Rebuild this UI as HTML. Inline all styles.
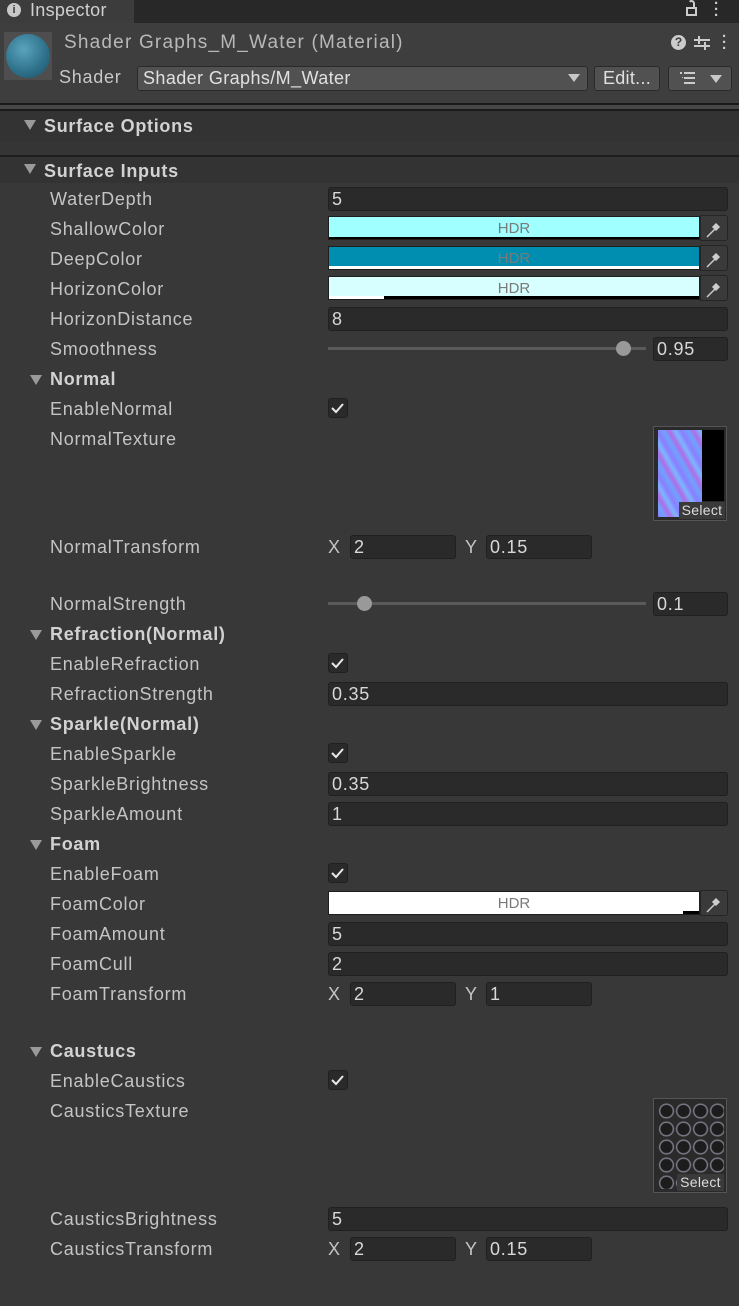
<!DOCTYPE html>
<html><head><meta charset="utf-8"><style>
*{margin:0;padding:0;box-sizing:border-box}
body{width:739px;height:1306px;background:#383838;font-family:"Liberation Sans",sans-serif;color:#c4c4c4;position:relative;overflow:hidden;font-size:18px;letter-spacing:0.75px}
.a{position:absolute}
.lbl{position:absolute;left:50px;height:24px;line-height:24px;white-space:nowrap}
.hd{position:absolute;left:50px;height:24px;line-height:24px;font-weight:bold;color:#d2d2d2;letter-spacing:0.7px}
.tri{position:absolute;left:30px;width:0;height:0;border-left:6px solid transparent;border-right:6px solid transparent;border-top:10px solid #9a9a9a}
.fld{position:absolute;left:328px;width:400px;height:24px;background:#2a2a2a;border:1px solid #202020;border-radius:3px;line-height:22px;padding-left:3px;color:#d8d8d8}
.chk{position:absolute;left:328px;width:20px;height:20px;background:#2a2a2a;border:1px solid #202020;border-radius:3px}
.col{position:absolute;left:328px;width:372px;height:24px;border:1px solid #1e1e1e}
.col span{position:absolute;left:0;right:0;top:3px;text-align:center;font-size:15px;color:#7a7a7a;letter-spacing:0}
.pick{position:absolute;left:700px;width:28px;height:26px;background:#3a3a3a;border:1px solid #252525;border-radius:0 3px 3px 0}
.small{position:absolute;height:24px;background:#2a2a2a;border:1px solid #202020;border-radius:3px;line-height:22px;padding-left:3px;color:#d8d8d8}
.xy{position:absolute;height:24px;line-height:24px}
</style></head><body>
<div class="a" style="left:0;top:0;width:739px;height:23px;background:#282828"></div>
<div class="a" style="left:0;top:0;width:134px;height:23px;background:#3c3c3c"></div>
<div class="a" style="left:7px;top:3px;width:14px;height:14px;border-radius:50%;background:#c8c8c8;color:#3c3c3c;font-size:11px;font-weight:bold;text-align:center;line-height:14px;letter-spacing:0">i</div>
<div class="a" style="left:30px;top:0;line-height:21px;font-size:18px;color:#d0d0d0;letter-spacing:0.3px">Inspector</div>
<div class="a" style="left:686px;top:7px;width:11px;height:9px;background:#282828;border:2px solid #ccc"></div>
<div class="a" style="left:688px;top:0px;width:7px;height:9px;border:2px solid #ccc;border-bottom:none;border-radius:4px 4px 0 0;border-left-color:transparent"></div>
<div class="a" style="left:714px;top:1px;color:#ccc;font-size:15px;font-weight:bold;line-height:6px">·<br>·<br>·</div>
<div class="a" style="left:0;top:23px;width:739px;height:80px;background:#3e3e3e"></div>
<div class="a" style="left:4px;top:32px;width:48px;height:48px;background:#4e4e4e"></div>
<div class="a" style="left:6px;top:34px;width:44px;height:44px;border-radius:50%;background:radial-gradient(circle at 40% 35%,#5aa3bd,#2d6f88 60%,#1d4f62)"></div>
<div class="a" style="left:64px;top:32px;font-size:19px;color:#b8b8b8;letter-spacing:1.2px">Shader Graphs_M_Water (Material)</div>
<div class="a" style="left:671px;top:35px;width:15px;height:15px;border-radius:50%;background:#ccc;color:#3e3e3e;font-size:12px;font-weight:bold;text-align:center;line-height:15px;letter-spacing:0">?</div>
<svg class="a" style="left:693px;top:34px" width="18" height="18"><g stroke="#ccc" stroke-width="2"><path d="M1 6h16M1 12h16M6 2v8M12 8v8"/></g></svg>
<div class="a" style="left:722px;top:34px;color:#ccc;font-size:15px;font-weight:bold;line-height:6px">·<br>·<br>·</div>
<div class="a" style="left:59px;top:67px;font-size:18px;color:#c8c8c8">Shader</div>
<div class="a" style="left:137px;top:66px;width:451px;height:25px;background:#515151;border:1px solid #2a2a2a;border-radius:3px;padding-left:5px;line-height:23px;font-size:18px;color:#e0e0e0;letter-spacing:0.4px">Shader Graphs/M_Water</div>
<div class="a" style="left:568px;top:74px;border-left:6px solid transparent;border-right:6px solid transparent;border-top:8px solid #c8c8c8"></div>
<div class="a" style="left:594px;top:66px;width:66px;height:25px;background:#515151;border:1px solid #2a2a2a;border-radius:3px;text-align:center;line-height:23px;font-size:18px;color:#e0e0e0;letter-spacing:0.3px">Edit...</div>
<div class="a" style="left:668px;top:66px;width:64px;height:25px;background:#515151;border:1px solid #2a2a2a;border-radius:3px"></div>
<svg class="a" style="left:680px;top:71px" width="16" height="14"><g fill="#ccc"><rect x="0" y="1" width="2" height="2"/><rect x="4" y="1" width="11" height="2"/><rect x="4" y="6" width="11" height="2"/><rect x="4" y="11" width="11" height="2"/><rect x="2" y="6" width="1" height="1"/></g></svg>
<div class="a" style="left:710px;top:75px;border-left:6px solid transparent;border-right:6px solid transparent;border-top:8px solid #c8c8c8"></div>
<div class="a" style="left:0;top:103px;width:739px;height:2px;background:#1a1a1a"></div>
<div class="a" style="left:0;top:105px;width:739px;height:4px;background:#474747"></div>
<div class="a" style="left:0;top:109px;width:739px;height:2px;background:#1a1a1a"></div>
<div class="a" style="left:0;top:111px;width:739px;height:31px;background:#333"></div>
<div class="a" style="left:0;top:142px;width:739px;height:13px;background:#353535"></div>
<div class="tri" style="top:120px;left:24px"></div>
<div class="hd" style="left:44px;top:114px;font-size:18px">Surface Options</div>
<div class="a" style="left:0;top:155px;width:739px;height:2px;background:#1e1e1e"></div>
<div class="a" style="left:0;top:157px;width:739px;height:26px;background:#333"></div>
<div class="tri" style="top:164px;left:24px"></div>
<div class="hd" style="left:44px;top:159px;font-size:18px">Surface Inputs</div>

<div class="lbl" style="top:187px">WaterDepth</div><div class="fld" style="top:187px">5</div>
<div class="lbl" style="top:217px">ShallowColor</div>
<div class="col" style="top:216px;background:linear-gradient(#a0ffff 0,#a0ffff 20px,#000 20px)"><span>HDR</span></div><div class="pick" style="top:215px"></div>
<div class="lbl" style="top:247px">DeepColor</div>
<div class="col" style="top:246px;background:linear-gradient(#008eb0 0,#008eb0 19px,#fff 19px)"><span>HDR</span></div><div class="pick" style="top:245px"></div>
<div class="lbl" style="top:277px">HorizonColor</div>
<div class="col" style="top:276px;background:linear-gradient(#d8ffff 0,#d8ffff 19px,transparent 19px),linear-gradient(90deg,#fff 55px,#000 55px)"><span>HDR</span></div><div class="pick" style="top:275px"></div>
<div class="lbl" style="top:307px">HorizonDistance</div><div class="fld" style="top:307px">8</div>
<div class="lbl" style="top:337px">Smoothness</div>
<div class="a" style="left:328px;top:347px;width:318px;height:3px;background:#5a5a5a"></div>
<div class="a" style="left:616px;top:341px;width:15px;height:15px;border-radius:50%;background:#999"></div>
<div class="small" style="left:653px;top:337px;width:75px">0.95</div>

<div class="tri" style="top:375px"></div><div class="hd" style="top:367px">Normal</div>
<div class="lbl" style="top:397px">EnableNormal</div><div class="chk" style="top:398px"></div>
<div class="lbl" style="top:427px">NormalTexture</div>
<div class="a" style="left:653px;top:426px;width:74px;height:95px;background:#2a2a2a;border:1px solid #555"></div>
<div class="a" style="left:658px;top:430px;width:44px;height:87px;background:repeating-linear-gradient(60deg,#8d7dff 0,#6fa3ff 6px,#b06ce8 11px,#7ab8ff 16px,#8d7dff 21px)"></div>
<div class="a" style="left:702px;top:430px;width:22px;height:71px;background:#000"></div>
<div class="a" style="left:679px;top:502px;width:46px;height:17px;background:#3a3a3a;font-size:14px;line-height:17px;color:#ddd;text-align:center;letter-spacing:0.3px">Select</div>
<div class="lbl" style="top:535px">NormalTransform</div>
<div class="xy" style="left:328px;top:535px">X</div><div class="small" style="left:350px;top:535px;width:106px">2</div>
<div class="xy" style="left:465px;top:535px">Y</div><div class="small" style="left:486px;top:535px;width:106px">0.15</div>
<div class="lbl" style="top:592px">NormalStrength</div>
<div class="a" style="left:328px;top:602px;width:318px;height:3px;background:#5a5a5a"></div>
<div class="a" style="left:357px;top:596px;width:15px;height:15px;border-radius:50%;background:#999"></div>
<div class="small" style="left:653px;top:592px;width:75px">0.1</div>

<div class="tri" style="top:630px"></div><div class="hd" style="top:622px">Refraction(Normal)</div>
<div class="lbl" style="top:652px">EnableRefraction</div><div class="chk" style="top:653px"></div>
<div class="lbl" style="top:682px">RefractionStrength</div><div class="fld" style="top:682px">0.35</div>
<div class="tri" style="top:720px"></div><div class="hd" style="top:712px">Sparkle(Normal)</div>
<div class="lbl" style="top:742px">EnableSparkle</div><div class="chk" style="top:743px"></div>
<div class="lbl" style="top:772px">SparkleBrightness</div><div class="fld" style="top:772px">0.35</div>
<div class="lbl" style="top:802px">SparkleAmount</div><div class="fld" style="top:802px">1</div>
<div class="tri" style="top:840px"></div><div class="hd" style="top:832px">Foam</div>
<div class="lbl" style="top:862px">EnableFoam</div><div class="chk" style="top:863px"></div>
<div class="lbl" style="top:892px">FoamColor</div>
<div class="col" style="top:891px;background:linear-gradient(90deg,#fff 354px,transparent 354px),linear-gradient(#fff 19px,#000 19px)"><span>HDR</span></div><div class="pick" style="top:890px"></div>
<div class="lbl" style="top:922px">FoamAmount</div><div class="fld" style="top:922px">5</div>
<div class="lbl" style="top:952px">FoamCull</div><div class="fld" style="top:952px">2</div>
<div class="lbl" style="top:982px">FoamTransform</div>
<div class="xy" style="left:328px;top:982px">X</div><div class="small" style="left:350px;top:982px;width:106px">2</div>
<div class="xy" style="left:465px;top:982px">Y</div><div class="small" style="left:486px;top:982px;width:106px">1</div>
<div class="tri" style="top:1047px"></div><div class="hd" style="top:1039px">Caustucs</div>
<div class="lbl" style="top:1069px">EnableCaustics</div><div class="chk" style="top:1070px"></div>
<div class="lbl" style="top:1099px">CausticsTexture</div>
<div class="a" style="left:653px;top:1098px;width:74px;height:95px;background:#2a2a2a;border:1px solid #555"></div>
<div class="a" style="left:658px;top:1102px;width:66px;height:87px;background:radial-gradient(circle,#1c1c1c 45%,#8a8a9a 55%,#2a2a2a 65%);background-size:17px 18px;background-color:#333"></div>
<div class="a" style="left:677px;top:1174px;width:47px;height:17px;background:#3a3a3a;font-size:14px;line-height:17px;color:#ddd;text-align:center;letter-spacing:0.3px">Select</div>
<div class="lbl" style="top:1207px">CausticsBrightness</div><div class="fld" style="top:1207px">5</div>
<div class="lbl" style="top:1237px">CausticsTransform</div>
<div class="xy" style="left:328px;top:1237px">X</div><div class="small" style="left:350px;top:1237px;width:106px">2</div>
<div class="xy" style="left:465px;top:1237px">Y</div><div class="small" style="left:486px;top:1237px;width:106px">0.15</div>

<svg class="a" style="left:0;top:0" width="739" height="1306">
<g fill="none" stroke="#e8e8e8" stroke-width="2">
<path d="M332 408l4 4 7-8"/><path d="M332 663l4 4 7-8"/><path d="M332 753l4 4 7-8"/><path d="M332 873l4 4 7-8"/><path d="M332 1080l4 4 7-8"/>
</g>
<g fill="#ccc" stroke="#ccc" stroke-width="1.5">
<path d="M707 237l8-8M713 227l3-3 3 3-3 3z" /><path d="M707 267l8-8M713 257l3-3 3 3-3 3z"/><path d="M707 297l8-8M713 287l3-3 3 3-3 3z"/><path d="M707 912l8-8M713 902l3-3 3 3-3 3z"/>
</g>
</svg>
</body></html>
